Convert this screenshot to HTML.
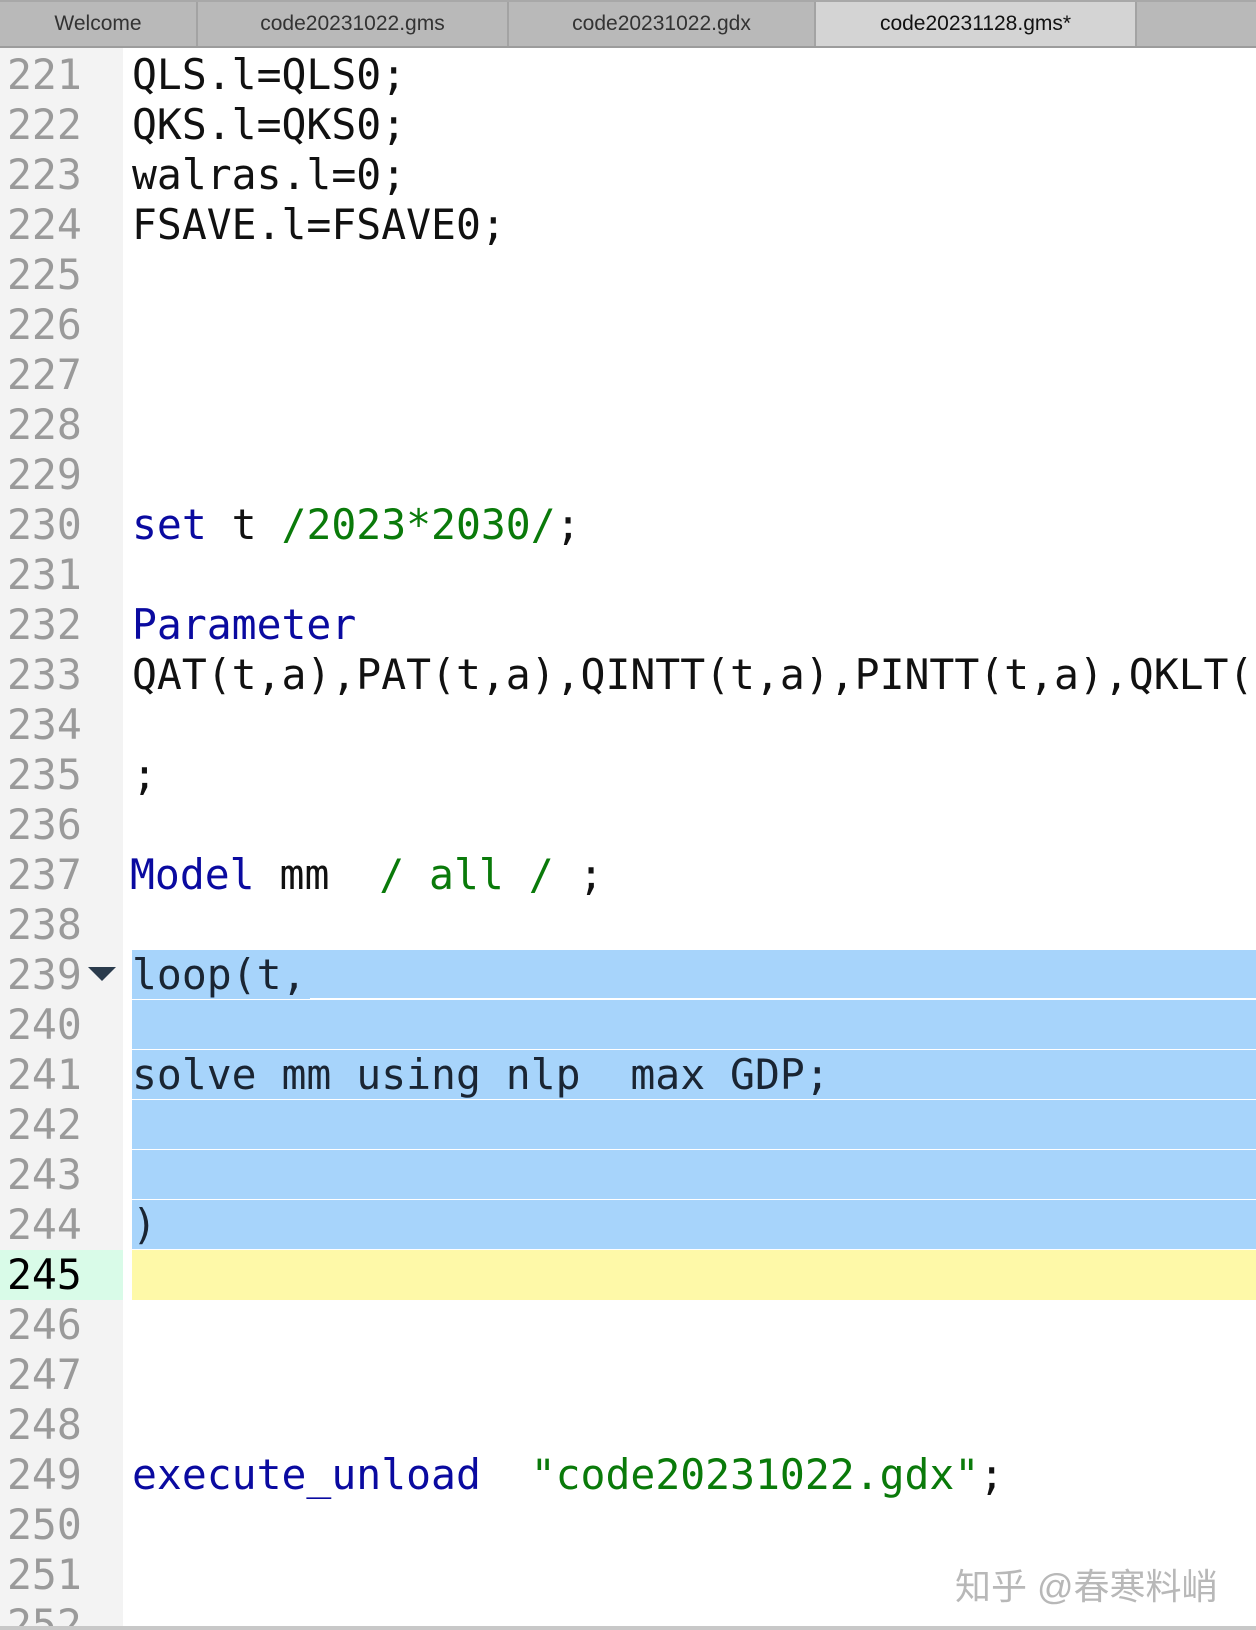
<!DOCTYPE html>
<html><head><meta charset="utf-8"><style>
*{margin:0;padding:0;box-sizing:border-box}
html,body{width:1256px;height:1630px;overflow:hidden}
body{background:#fff;position:relative;font-family:"DejaVu Sans Mono","Liberation Mono",monospace}
.tabs{position:absolute;left:0;top:0;width:1256px;height:48px;background:#b9b9b9;border-top:2px solid #a8a8a8;border-bottom:2px solid #9c9c9c}
.tab{position:absolute;top:0;height:44px;border-right:2px solid #a3a3a3;font:21px "Liberation Sans",sans-serif;color:#333;text-align:center;line-height:44px}
.gutter{position:absolute;left:0;top:48px;width:123px;height:1580px;background:#f3f3f3}
.ln{position:absolute;left:7px;font-size:41.4px;color:#9a9a9a;height:50px;line-height:50px}
.code{position:absolute;left:132px;font-size:41.4px;color:#111;height:50px;line-height:50px;white-space:pre}
.sel{position:absolute;left:132px;width:1124px;height:49px;background:#a7d4fb}
.k{color:#0a0aa0}.g{color:#0a7a0a}
</style></head><body>
<div class="tabs">
<div class="tab" style="left:0;width:198px">Welcome</div>
<div class="tab" style="left:198px;width:311px">code20231022.gms</div>
<div class="tab" style="left:509px;width:307px">code20231022.gdx</div>
<div class="tab" style="left:816px;width:321px;background:#d4d4d4;color:#111">code20231128.gms*</div>
</div>
<div class="gutter"></div>
<div style="position:absolute;left:0;top:1250px;width:123px;height:50px;background:#d9fbe8"></div>
<div class="sel" style="top:950px"></div>
<div style="position:absolute;left:310px;top:998px;width:946px;height:1px;background:#fff"></div>
<div class="sel" style="top:1000px"></div>
<div class="sel" style="top:1050px"></div>
<div class="sel" style="top:1100px"></div>
<div class="sel" style="top:1150px"></div>
<div class="sel" style="top:1200px"></div>
<div style="position:absolute;left:132px;top:1250px;width:1124px;height:50px;background:#fef9a8"></div>
<div style="position:absolute;left:88px;top:967px;width:0;height:0;border-left:14px solid transparent;border-right:14px solid transparent;border-top:14px solid #2a3b4c"></div>

<div class="ln" style="top:50px">221</div><div class="code" style="top:50px">QLS.l=QLS0;</div>
<div class="ln" style="top:100px">222</div><div class="code" style="top:100px">QKS.l=QKS0;</div>
<div class="ln" style="top:150px">223</div><div class="code" style="top:150px">walras.l=0;</div>
<div class="ln" style="top:200px">224</div><div class="code" style="top:200px">FSAVE.l=FSAVE0;</div>
<div class="ln" style="top:250px">225</div>
<div class="ln" style="top:300px">226</div>
<div class="ln" style="top:350px">227</div>
<div class="ln" style="top:400px">228</div>
<div class="ln" style="top:450px">229</div>
<div class="ln" style="top:500px">230</div><div class="code" style="top:500px"><span class="k">set</span> t <span class="g">/2023*2030/</span>;</div>
<div class="ln" style="top:550px">231</div>
<div class="ln" style="top:600px">232</div><div class="code k" style="top:600px">Parameter</div>
<div class="ln" style="top:650px">233</div><div class="code" style="top:650px;width:1124px;overflow:hidden">QAT(t,a),PAT(t,a),QINTT(t,a),PINTT(t,a),QKLT(</div>
<div class="ln" style="top:700px">234</div>
<div class="ln" style="top:750px">235</div><div class="code" style="top:750px">;</div>
<div class="ln" style="top:800px">236</div>
<div class="ln" style="top:850px">237</div><div class="code" style="top:850px;left:130px"><span class="k">Model</span> mm  <span class="g">/ all /</span> ;</div>
<div class="ln" style="top:900px">238</div>
<div class="ln" style="top:950px">239</div><div class="code" style="top:950px;color:#1a2533">loop(t,</div>
<div class="ln" style="top:1000px">240</div>
<div class="ln" style="top:1050px">241</div><div class="code" style="top:1050px;color:#1a2533">solve mm using nlp  max GDP;</div>
<div class="ln" style="top:1100px">242</div>
<div class="ln" style="top:1150px">243</div>
<div class="ln" style="top:1200px">244</div><div class="code" style="top:1200px;color:#1a2533">)</div>
<div class="ln" style="top:1250px;color:#000">245</div>
<div class="ln" style="top:1300px">246</div>
<div class="ln" style="top:1350px">247</div>
<div class="ln" style="top:1400px">248</div>
<div class="ln" style="top:1450px">249</div><div class="code" style="top:1450px"><span class="k">execute_unload</span>  <span class="g">"code20231022.gdx"</span>;</div>
<div class="ln" style="top:1500px">250</div>
<div class="ln" style="top:1550px">251</div>
<div class="ln" style="top:1600px;height:26px;overflow:hidden">252</div>
<div style="position:absolute;left:955px;top:1558px;font:36px 'Liberation Sans','Noto Sans CJK SC',sans-serif;color:#b8b8b8;white-space:nowrap">知乎 @春寒料峭</div>
<div style="position:absolute;left:0;top:1626px;width:1256px;height:4px;background:#c8c8c8"></div>
</body></html>
